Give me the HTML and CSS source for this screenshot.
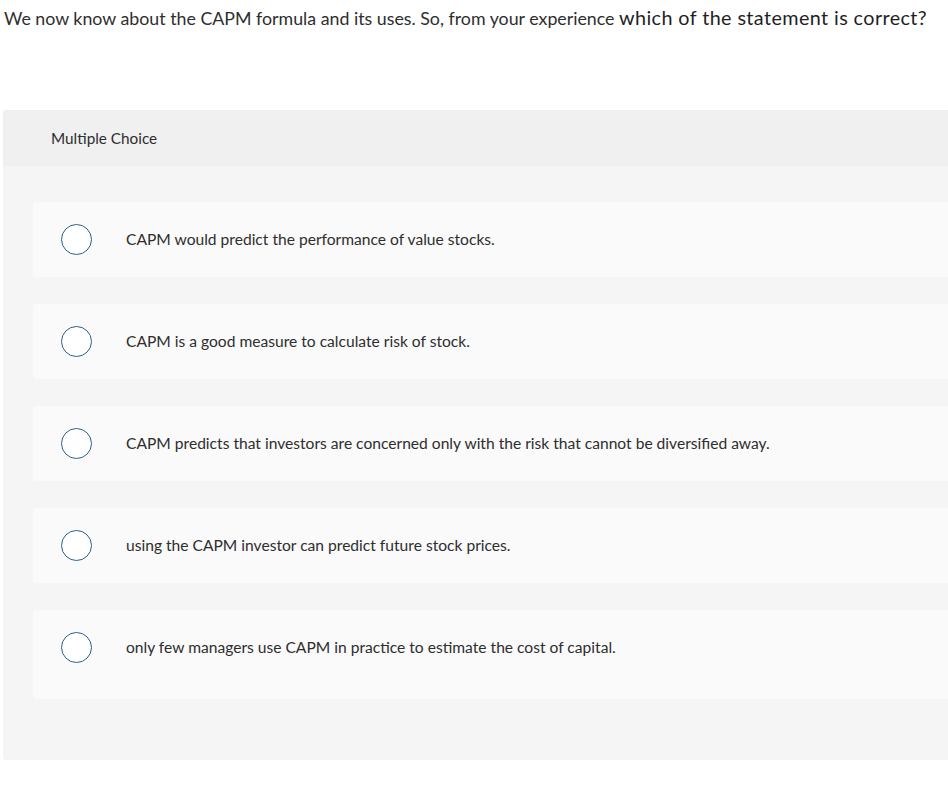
FILE: index.html
```html
<!DOCTYPE html>
<html>
<head>
<meta charset="utf-8">
<link rel="stylesheet" href="styles.css">
</head>
<body>
<p class="prompt"><span class="lead">We now know about the CAPM formula and its uses. So, from your experience </span><span class="ask">which of the statement is correct?</span></p>
<section class="panel">
  <header class="panel-head">Multiple Choice</header>
  <div class="panel-body">
    <label class="choice"><span class="radio"></span><span class="choice-text">CAPM would predict the performance of value stocks.</span></label>
    <label class="choice"><span class="radio"></span><span class="choice-text">CAPM is a good measure to calculate risk of stock.</span></label>
    <label class="choice"><span class="radio"></span><span class="choice-text">CAPM predicts that investors are concerned only with the risk that cannot be diversified away.</span></label>
    <label class="choice"><span class="radio"></span><span class="choice-text">using the CAPM investor can predict future stock prices.</span></label>
    <label class="choice choice-last"><span class="radio"></span><span class="choice-text">only few managers use CAPM in practice to estimate the cost of capital.</span></label>
  </div>
</section>
</body>
</html>
```

FILE: styles.css
```css
html, body {
  margin: 0;
  padding: 0;
  background: #ffffff;
}
body {
  font-family: Lato, "Noto Sans", sans-serif;
  color: #2b2b2b;
  width: 948px;
  overflow: hidden;
}
.prompt {
  margin: 0;
  padding: 5px 0 0 4px;
  height: 105px;
  box-sizing: border-box;
  line-height: 24px;
  white-space: nowrap;
}
.lead {
  font-size: 17.8px;
  color: #2e2e2e;
}
.ask {
  font-size: 19.8px;
  letter-spacing: 0.4px;
  color: #1f1f1f;
}
.panel {
  margin-left: 3px;
  background: #f5f5f5;
  border-radius: 3px 0 0 3px;
  height: 650px;
  margin-top: 5px;
}
.panel-head {
  height: 56px;
  background: #f0f0f0;
  border-radius: 3px 0 0 0;
  display: flex;
  align-items: center;
  padding-left: 48px;
  font-size: 15.3px;
  color: #2e2e2e;
}
.panel-body {
  padding: 36px 0 60px 30px;
  display: flex;
  flex-direction: column;
  gap: 27px;
}
.choice {
  display: flex;
  align-items: flex-start;
  background: #fafafa;
  border-radius: 3px 0 0 3px;
  padding: 22px 0 22px 28px;
  height: 75px;
  box-sizing: border-box;
}
.choice-last {
  height: 89px;
}
.radio {
  width: 31px;
  height: 31px;
  box-sizing: border-box;
  border: 1.5px solid #2e5f8e;
  border-radius: 50%;
  background: #ffffff;
  flex: none;
}
.choice-text {
  margin-left: 34px;
  font-size: 15.6px;
  line-height: 31px;
  color: #2e2e2e;
}
```
